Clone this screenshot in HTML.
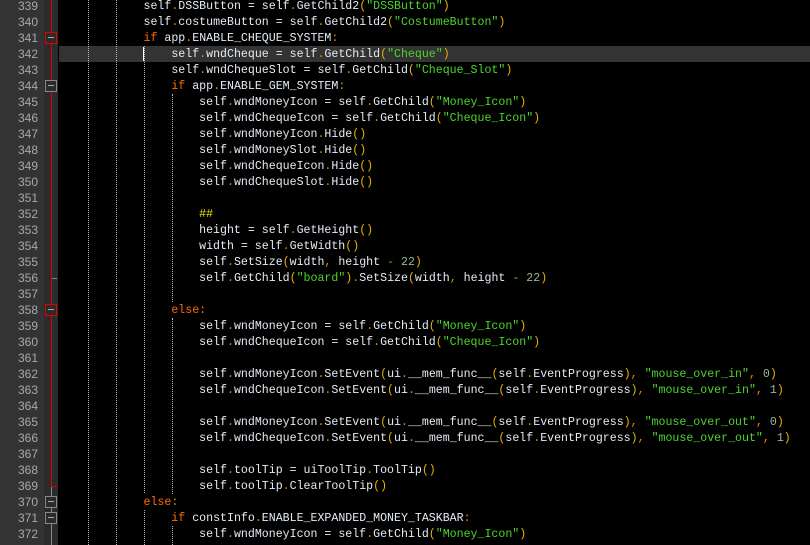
<!DOCTYPE html>
<html><head><meta charset="utf-8"><style>
html,body{margin:0;padding:0;background:#000;width:810px;height:545px;overflow:hidden;position:relative}
.gut{position:absolute;left:0;top:0;width:44px;height:545px;background:#333}
.fold{position:absolute;left:44px;top:0;width:14px;height:545px;background:#2b2b2b}
.ln{position:absolute;left:0;width:38px;text-align:right;font:12px "Liberation Sans",sans-serif;color:#a8a8a8;height:16px;line-height:16px}
.l{position:absolute;left:60px;height:16px;line-height:16px;white-space:pre;font-family:"Liberation Mono","DejaVu Sans Mono","Courier New",monospace;font-size:11.6px;color:#e4ecf4;margin-top:1px}
.g{position:absolute;width:0;border-left:1px dotted #bbb}
.k{color:#ff6a00}.s{color:#4cd42c}.o{color:#e08a00}.p{color:#e8b000}.n{color:#9ab89a}.c{color:#e8e800}
.box{position:absolute;left:45px;width:10px;height:10px;border:1px solid #888;background:#2b2b2b}
.box::after{content:"";position:absolute;left:2px;top:4px;width:6px;height:1px;background:#aaa}
.box.r{border-color:#e00000}
</style></head><body>
<div class="gut"></div><div class="fold"></div>
<div style="position:absolute;left:59px;top:46px;width:751px;height:16px;background:#333"></div>
<div style="position:absolute;left:143px;top:47px;width:1px;height:14px;background:#fff"></div>
<div style="position:absolute;left:51px;top:0;width:1px;height:487px;background:#e00000"></div>
<div style="position:absolute;left:51px;top:486px;width:6px;height:1px;background:#e00000"></div>
<div style="position:absolute;left:51px;top:487px;width:1px;height:58px;background:#888"></div>
<div style="position:absolute;left:52px;top:278px;width:5px;height:1px;background:#888"></div>
<div class="box r" style="top:32px"></div>
<div class="box" style="top:80px"></div>
<div class="box r" style="top:304px"></div>
<div class="box" style="top:496px"></div>
<div class="box" style="top:512px"></div>
<div class="g" style="left:88px;top:0;height:545px"></div>
<div class="g" style="left:116px;top:0;height:545px"></div>
<div class="g" style="left:144px;top:46px;height:447px"></div>
<div class="g" style="left:144px;top:510px;height:35px"></div>
<div class="g" style="left:172px;top:94px;height:208px"></div>
<div class="g" style="left:172px;top:318px;height:176px"></div>
<div class="g" style="left:172px;top:526px;height:19px"></div>

<div class="ln" style="top:-2px">339</div><div class="ln" style="top:14px">340</div><div class="ln" style="top:30px">341</div><div class="ln" style="top:46px">342</div><div class="ln" style="top:62px">343</div><div class="ln" style="top:78px">344</div><div class="ln" style="top:94px">345</div><div class="ln" style="top:110px">346</div><div class="ln" style="top:126px">347</div><div class="ln" style="top:142px">348</div><div class="ln" style="top:158px">349</div><div class="ln" style="top:174px">350</div><div class="ln" style="top:190px">351</div><div class="ln" style="top:206px">352</div><div class="ln" style="top:222px">353</div><div class="ln" style="top:238px">354</div><div class="ln" style="top:254px">355</div><div class="ln" style="top:270px">356</div><div class="ln" style="top:286px">357</div><div class="ln" style="top:302px">358</div><div class="ln" style="top:318px">359</div><div class="ln" style="top:334px">360</div><div class="ln" style="top:350px">361</div><div class="ln" style="top:366px">362</div><div class="ln" style="top:382px">363</div><div class="ln" style="top:398px">364</div><div class="ln" style="top:414px">365</div><div class="ln" style="top:430px">366</div><div class="ln" style="top:446px">367</div><div class="ln" style="top:462px">368</div><div class="ln" style="top:478px">369</div><div class="ln" style="top:494px">370</div><div class="ln" style="top:510px">371</div><div class="ln" style="top:526px">372</div>

<div class="l" style="top:-2px">            self<span class="o">.</span>DSSButton = self<span class="o">.</span>GetChild2<span class="p">(</span><span class="s">"DSSButton"</span><span class="p">)</span></div>
<div class="l" style="top:14px">            self<span class="o">.</span>costumeButton = self<span class="o">.</span>GetChild2<span class="p">(</span><span class="s">"CostumeButton"</span><span class="p">)</span></div>
<div class="l" style="top:30px">            <span class="k">if</span> app<span class="o">.</span>ENABLE_CHEQUE_SYSTEM<span class="o">:</span></div>
<div class="l" style="top:46px">                self<span class="o">.</span>wndCheque = self<span class="o">.</span>GetChild<span class="p">(</span><span class="s">"Cheque"</span><span class="p">)</span></div>
<div class="l" style="top:62px">                self<span class="o">.</span>wndChequeSlot = self<span class="o">.</span>GetChild<span class="p">(</span><span class="s">"Cheque_Slot"</span><span class="p">)</span></div>
<div class="l" style="top:78px">                <span class="k">if</span> app<span class="o">.</span>ENABLE_GEM_SYSTEM<span class="o">:</span></div>
<div class="l" style="top:94px">                    self<span class="o">.</span>wndMoneyIcon = self<span class="o">.</span>GetChild<span class="p">(</span><span class="s">"Money_Icon"</span><span class="p">)</span></div>
<div class="l" style="top:110px">                    self<span class="o">.</span>wndChequeIcon = self<span class="o">.</span>GetChild<span class="p">(</span><span class="s">"Cheque_Icon"</span><span class="p">)</span></div>
<div class="l" style="top:126px">                    self<span class="o">.</span>wndMoneyIcon<span class="o">.</span>Hide<span class="p">()</span></div>
<div class="l" style="top:142px">                    self<span class="o">.</span>wndMoneySlot<span class="o">.</span>Hide<span class="p">()</span></div>
<div class="l" style="top:158px">                    self<span class="o">.</span>wndChequeIcon<span class="o">.</span>Hide<span class="p">()</span></div>
<div class="l" style="top:174px">                    self<span class="o">.</span>wndChequeSlot<span class="o">.</span>Hide<span class="p">()</span></div>
<div class="l" style="top:206px">                    <span class="c">##</span></div>
<div class="l" style="top:222px">                    height = self<span class="o">.</span>GetHeight<span class="p">()</span></div>
<div class="l" style="top:238px">                    width = self<span class="o">.</span>GetWidth<span class="p">()</span></div>
<div class="l" style="top:254px">                    self<span class="o">.</span>SetSize<span class="p">(</span>width<span class="o">,</span> height <span class="o">-</span> <span class="n">22</span><span class="p">)</span></div>
<div class="l" style="top:270px">                    self<span class="o">.</span>GetChild<span class="p">(</span><span class="s">"board"</span><span class="p">)</span><span class="o">.</span>SetSize<span class="p">(</span>width<span class="o">,</span> height <span class="o">-</span> <span class="n">22</span><span class="p">)</span></div>
<div class="l" style="top:302px">                <span class="k">else</span><span class="o">:</span></div>
<div class="l" style="top:318px">                    self<span class="o">.</span>wndMoneyIcon = self<span class="o">.</span>GetChild<span class="p">(</span><span class="s">"Money_Icon"</span><span class="p">)</span></div>
<div class="l" style="top:334px">                    self<span class="o">.</span>wndChequeIcon = self<span class="o">.</span>GetChild<span class="p">(</span><span class="s">"Cheque_Icon"</span><span class="p">)</span></div>
<div class="l" style="top:366px">                    self<span class="o">.</span>wndMoneyIcon<span class="o">.</span>SetEvent<span class="p">(</span>ui<span class="o">.</span>__mem_func__<span class="p">(</span>self<span class="o">.</span>EventProgress<span class="p">)</span><span class="o">,</span> <span class="s">"mouse_over_in"</span><span class="o">,</span> <span class="n">0</span><span class="p">)</span></div>
<div class="l" style="top:382px">                    self<span class="o">.</span>wndChequeIcon<span class="o">.</span>SetEvent<span class="p">(</span>ui<span class="o">.</span>__mem_func__<span class="p">(</span>self<span class="o">.</span>EventProgress<span class="p">)</span><span class="o">,</span> <span class="s">"mouse_over_in"</span><span class="o">,</span> <span class="n">1</span><span class="p">)</span></div>
<div class="l" style="top:414px">                    self<span class="o">.</span>wndMoneyIcon<span class="o">.</span>SetEvent<span class="p">(</span>ui<span class="o">.</span>__mem_func__<span class="p">(</span>self<span class="o">.</span>EventProgress<span class="p">)</span><span class="o">,</span> <span class="s">"mouse_over_out"</span><span class="o">,</span> <span class="n">0</span><span class="p">)</span></div>
<div class="l" style="top:430px">                    self<span class="o">.</span>wndChequeIcon<span class="o">.</span>SetEvent<span class="p">(</span>ui<span class="o">.</span>__mem_func__<span class="p">(</span>self<span class="o">.</span>EventProgress<span class="p">)</span><span class="o">,</span> <span class="s">"mouse_over_out"</span><span class="o">,</span> <span class="n">1</span><span class="p">)</span></div>
<div class="l" style="top:462px">                    self<span class="o">.</span>toolTip = uiToolTip<span class="o">.</span>ToolTip<span class="p">()</span></div>
<div class="l" style="top:478px">                    self<span class="o">.</span>toolTip<span class="o">.</span>ClearToolTip<span class="p">()</span></div>
<div class="l" style="top:494px">            <span class="k">else</span><span class="o">:</span></div>
<div class="l" style="top:510px">                <span class="k">if</span> constInfo<span class="o">.</span>ENABLE_EXPANDED_MONEY_TASKBAR<span class="o">:</span></div>
<div class="l" style="top:526px">                    self<span class="o">.</span>wndMoneyIcon = self<span class="o">.</span>GetChild<span class="p">(</span><span class="s">"Money_Icon"</span><span class="p">)</span></div>
</body></html>
